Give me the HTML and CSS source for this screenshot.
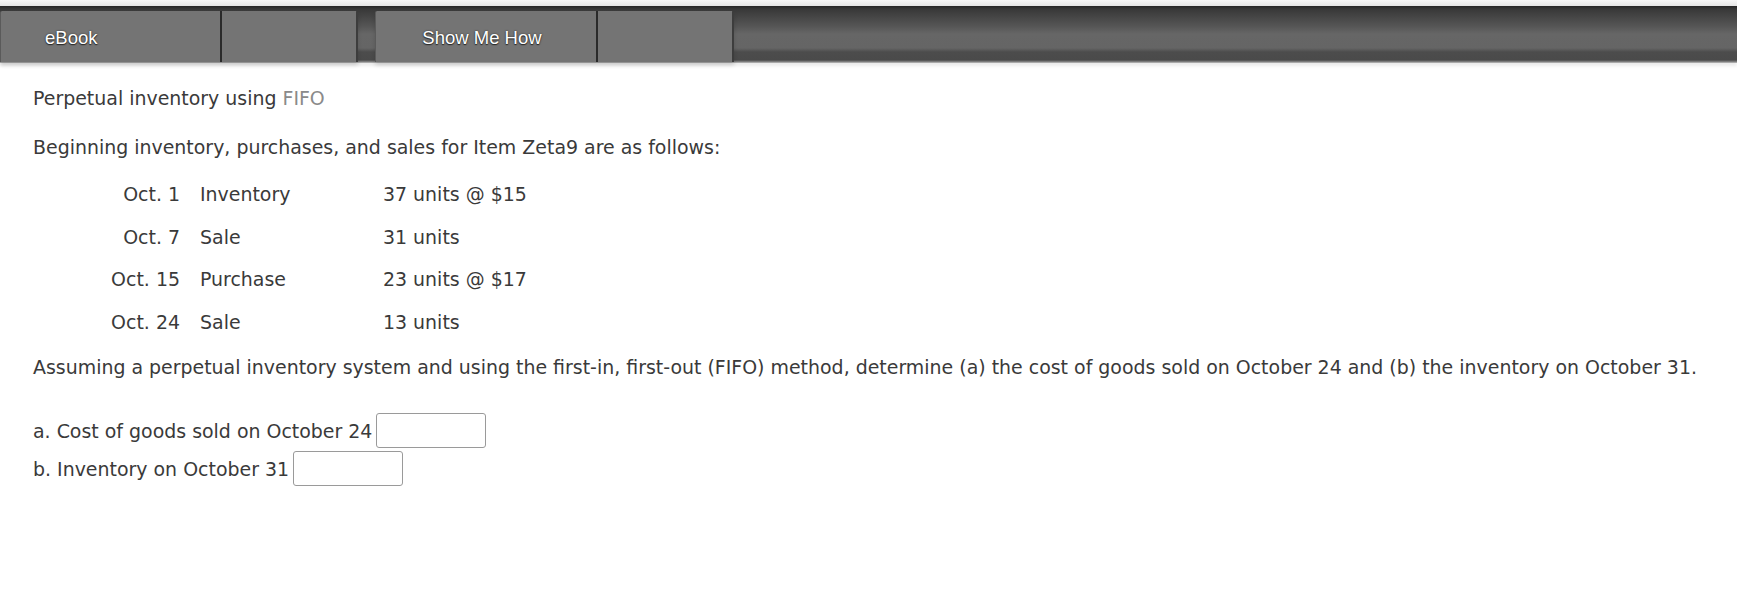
FILE: index.html
```html
<!DOCTYPE html>
<html>
<head>
<meta charset="utf-8">
<link rel="stylesheet" href="styles.css">
</head>
<body>
<div class="top-strip"></div>
<div class="bar">
  <div class="tab tab-first">
    <div class="tab-label">eBook</div>
    <div class="tab-rest"></div>
  </div>
  <div class="tab tab-second">
    <div class="tab-label">Show Me How</div>
    <div class="tab-rest"></div>
  </div>
</div>
<div class="content">
  <p class="title">Perpetual inventory using <span class="term">FIFO</span></p>
  <p class="intro">Beginning inventory, purchases, and sales for Item Zeta9 are as follows:</p>
  <table class="items">
    <tr><td class="date">Oct. 1</td><td class="kind">Inventory</td><td class="qty">37 units @ $15</td></tr>
    <tr><td class="date">Oct. 7</td><td class="kind">Sale</td><td class="qty">31 units</td></tr>
    <tr><td class="date">Oct. 15</td><td class="kind">Purchase</td><td class="qty">23 units @ $17</td></tr>
    <tr><td class="date">Oct. 24</td><td class="kind">Sale</td><td class="qty">13 units</td></tr>
  </table>
  <p class="question">Assuming a perpetual inventory system and using the first-in, first-out (FIFO) method, determine (a) the cost of goods sold on October 24 and (b) the inventory on October 31.</p>
  <div class="answers">
    <div class="answer">a. Cost of goods sold on October 24 <input class="box" type="text"></div>
    <div class="answer">b. Inventory on October 31 <input class="box" type="text"></div>
  </div>
</div>
</body>
</html>
```
FILE: styles.css
```css
html, body {
  margin: 0;
  padding: 0;
  background: #ffffff;
}
body {
  font-family: "DejaVu Sans", Verdana, sans-serif;
  color: #3a3a3a;
}
.top-strip {
  height: 6px;
  background: linear-gradient(#f8f8f8, #e6e6e6);
}
.bar {
  height: 57px;
  display: flex;
  align-items: flex-start;
  gap: 17px;
  background: linear-gradient(#262626 0px, #383838 3px, #444 10px, #555 20px, #666 28px, #656565 42px, #4c4c4c 46px, #4a4a4a 54px, #8a8a8a 56px, #c8c8c8 57px);
  box-shadow: 0 3px 3px rgba(0,0,0,0.08);
}
.tab {
  margin-top: 5px;
  height: 51px;
  display: flex;
  background: #747474;
  border-radius: 2px 2px 0 0;
  box-shadow: 0 3px 4px rgba(0,0,0,0.15);
  border-left: 1px solid #5a5a5a;
  border-right: 2px solid #3d3d3d;
}
.tab-first { width: 355px; }
.tab-second { width: 356px; }
.tab-label {
  font-family: "Liberation Sans", Arial, sans-serif;
  font-size: 18.5px;
  color: #ffffff;
  text-shadow: 0 0 2px #333, 0 1px 1px #222;
  display: flex;
  align-items: center;
  justify-content: center;
  border-right: 2px solid #2a2a2a;
  padding-top: 2px;
  box-sizing: border-box;
}
.tab-first .tab-label { width: 221px; justify-content: flex-start; padding-left: 44px; }
.tab-second .tab-label { width: 222px; padding-right: 8px; }
.tab-rest { flex: 1; }
.content {
  padding-left: 33px;
  font-size: 18.95px;
}
p { margin: 0; }
.title { margin-top: 22px; line-height: 26px; }
.term { color: #8a8a8a; }
.intro { margin-top: 23px; line-height: 26px; }
.items {
  border-collapse: collapse;
  margin-top: 13px;
}
.items td {
  padding: 0;
  height: 42.5px;
  vertical-align: middle;
}
.date { width: 147px; text-align: right; padding-right: 20px !important; }
.kind { width: 183px; }
.question { margin-top: 11px; line-height: 26px; }
.answers { margin-top: 33px; display: flex; flex-direction: column; gap: 3px; }
.answer { display: flex; align-items: center; gap: 4px; line-height: 26px; }
.box {
  width: 110px;
  height: 35px;
  box-sizing: border-box;
  border: 1px solid #9a9a9a;
  border-radius: 3px;
  margin: 0;
  padding: 0 4px;
  background: #fff;
}
```
